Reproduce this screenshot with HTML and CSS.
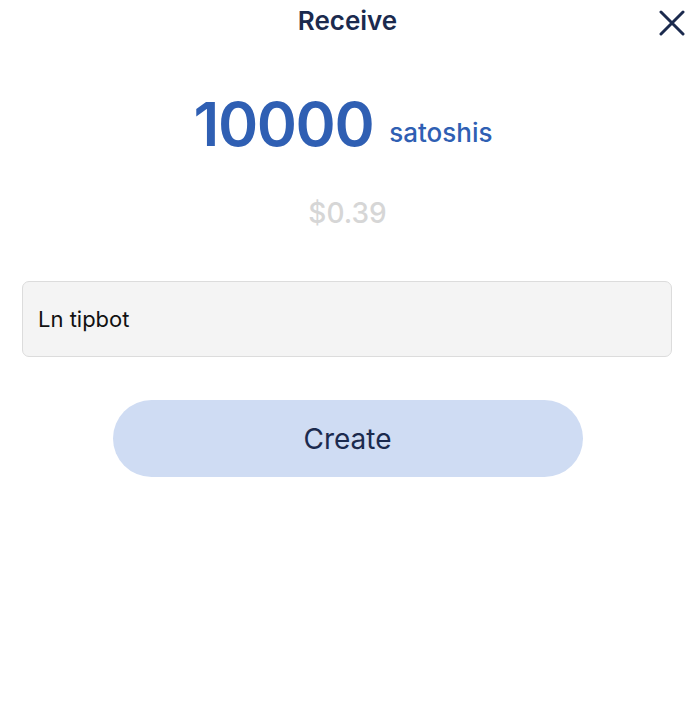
FILE: index.html
```html
<!DOCTYPE html>
<html>
<head>
<meta charset="utf-8">
<link rel="stylesheet" href="styles.css">
</head>
<body>
<div class="screen">
  <header class="header">
    <h1 class="title">Receive</h1>
    <button class="close" aria-label="Close">
      <svg width="26" height="26" viewBox="0 0 26 26"><path d="M2 2 L24 24 M24 2 L2 24" stroke="#1b2a4e" stroke-width="3" stroke-linecap="round"/></svg>
    </button>
  </header>
  <div class="amount"><span class="value">10000</span><span class="unit">satoshis</span></div>
  <div class="fiat">$0.39</div>
  <div class="field">
    <div class="input">Ln tipbot</div>
  </div>
  <div class="actions">
    <button class="create">Create</button>
  </div>
</div>
</body>
</html>
```
FILE: styles.css
```css
* { box-sizing: border-box; }
html, body { margin: 0; padding: 0; background: #fff; }
body { font-family: Inter, "Noto Sans", "Liberation Sans", sans-serif; }
.screen { width: 695px; height: 712px; display: flex; flex-direction: column; }
.header { position: relative; height: 42px; display: flex; align-items: center; justify-content: center; }
.title { margin: 0; font-size: 26px; font-weight: 600; color: #1b2a4e; line-height: 42px; }
.close { position: absolute; right: 9px; top: 9px; width: 28px; height: 28px; padding: 0; border: 0; background: none; display: flex; align-items: center; justify-content: center; }
.amount { margin-top: 43px; padding-right: 9px; text-align: center; height: 78px; line-height: 78px; color: #2f5fb3; white-space: nowrap; }
.value { font-size: 61px; font-weight: 600; letter-spacing: -1.4px; }
.unit { font-size: 26px; font-weight: 500; margin-left: 16px; vertical-align: 4px; line-height: 1; }
.fiat { margin-top: 30px; text-align: center; font-size: 28px; font-weight: 500; color: #d6d6d6; line-height: 40px; }
.field { margin-top: 48px; padding: 0 23px 0 22px; }
.input { height: 76px; background: #f4f4f4; border: 1.5px solid #dcdcdc; border-radius: 7px; padding: 0 15px; display: flex; align-items: center; font-size: 22px; color: #111; }
.actions { margin-top: 43px; display: flex; justify-content: center; }
.create { width: 470px; height: 77px; border: 0; border-radius: 39px; background: #cfdcf3; color: #1b2a4e; font-family: inherit; font-size: 28px; font-weight: 400; }
```
